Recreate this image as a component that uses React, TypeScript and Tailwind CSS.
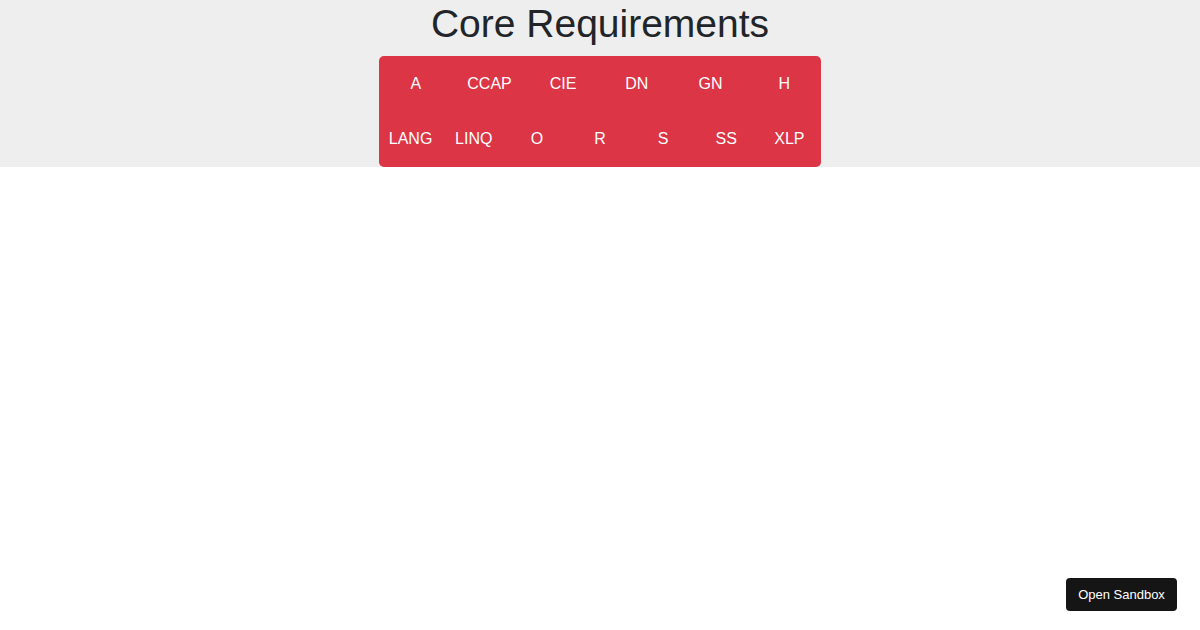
import React from 'react';

const rowOne = ['A', 'CCAP', 'CIE', 'DN', 'GN', 'H'];
const rowTwo = ['LANG', 'LINQ', 'O', 'R', 'S', 'SS', 'XLP'];

const Cell: React.FC<{ label: string }> = ({ label }) => (
  <div className="h-[55px] flex items-center justify-center text-white text-[16px]">{label}</div>
);

export default function App() {
  return (
    <div className="relative w-[1200px] h-[630px] bg-white font-['Liberation_Sans',Arial,sans-serif]">
      <header className="bg-[#eeeeee] h-[167px] flex flex-col items-center">
        <h1 className="text-[39px] leading-[48px] text-[#212529]">Core Requirements</h1>
        <div className="mt-[8px] w-[442px] h-[111px] bg-[#dc3545] rounded-[5px]">
          <div className="grid grid-cols-6">
            {rowOne.map((r) => (
              <Cell key={r} label={r} />
            ))}
          </div>
          <div className="grid grid-cols-7">
            {rowTwo.map((r) => (
              <Cell key={r} label={r} />
            ))}
          </div>
        </div>
      </header>
      <button className="absolute right-[23px] bottom-[19px] w-[111px] h-[33px] bg-[#151515] rounded-[4px] text-white text-[13px]">
        Open Sandbox
      </button>
    </div>
  );
}
